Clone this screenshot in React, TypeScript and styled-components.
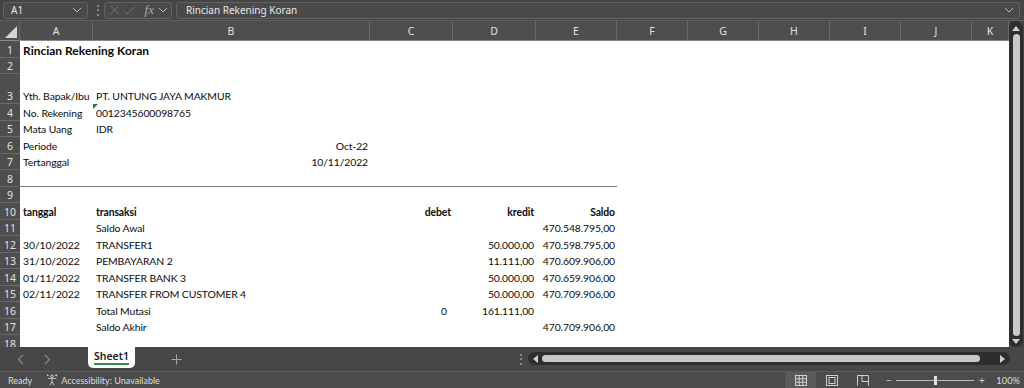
import React from "react";
import styled, { createGlobalStyle } from "styled-components";

const GlobalStyle = createGlobalStyle`
  html, body {
    margin: 0;
    padding: 0;
    background: #444;
  }
  * { box-sizing: border-box; }
`;

// row header + A..J fixed, K takes the rest up to the scrollbar
const COLS = "20px 73px 277px 83px 83px 81px 71px 71px 71px 71px 71px 1fr";
const LETTERS = ["A", "B", "C", "D", "E", "F", "G", "H", "I", "J", "K"];
const UI_FONT = `"Noto Sans", "Open Sans", sans-serif`;
const CELL_FONT = `Lato, "Noto Sans", sans-serif`;

type CellData = { text: string; align?: "left" | "right"; bold?: boolean; pr?: number; flag?: boolean; big?: boolean };
type RowData = { n: number; h: number; cells: (CellData | null)[]; rule?: boolean };

const rows: RowData[] = [
  { n: 1, h: 17, cells: [{ text: "Rincian Rekening Koran", bold: true, big: true }] },
  { n: 2, h: 16, cells: [] },
  { n: 3, h: 30, cells: [{ text: "Yth. Bapak/Ibu" }, { text: "PT. UNTUNG JAYA MAKMUR" }] },
  { n: 4, h: 16.5, cells: [{ text: "No. Rekening" }, { text: "0012345600098765", flag: true }] },
  { n: 5, h: 16.5, cells: [{ text: "Mata Uang" }, { text: "IDR" }] },
  { n: 6, h: 16.5, cells: [{ text: "Periode" }, { text: "Oct-22", align: "right" }] },
  { n: 7, h: 16.5, cells: [{ text: "Tertanggal" }, { text: "10/11/2022", align: "right" }] },
  { n: 8, h: 16.5, cells: [], rule: true },
  { n: 9, h: 16.5, cells: [] },
  {
    n: 10,
    h: 16.5,
    cells: [
      { text: "tanggal", bold: true },
      { text: "transaksi", bold: true },
      { text: "debet", bold: true, align: "right" },
      { text: "kredit", bold: true, align: "right" },
      { text: "Saldo", bold: true, align: "right" },
    ],
  },
  { n: 11, h: 16.5, cells: [null, { text: "Saldo Awal" }, null, null, { text: "470.548.795,00", align: "right" }] },
  {
    n: 12,
    h: 16.5,
    cells: [{ text: "30/10/2022" }, { text: "TRANSFER1" }, null, { text: "50.000,00", align: "right" }, { text: "470.598.795,00", align: "right" }],
  },
  {
    n: 13,
    h: 16.5,
    cells: [{ text: "31/10/2022" }, { text: "PEMBAYARAN 2" }, null, { text: "11.111,00", align: "right" }, { text: "470.609.906,00", align: "right" }],
  },
  {
    n: 14,
    h: 16.5,
    cells: [{ text: "01/11/2022" }, { text: "TRANSFER BANK 3" }, null, { text: "50.000,00", align: "right" }, { text: "470.659.906,00", align: "right" }],
  },
  {
    n: 15,
    h: 16.5,
    cells: [
      { text: "02/11/2022" },
      { text: "TRANSFER FROM CUSTOMER 4" },
      null,
      { text: "50.000,00", align: "right" },
      { text: "470.709.906,00", align: "right" },
    ],
  },
  {
    n: 16,
    h: 16.5,
    cells: [null, { text: "Total Mutasi" }, { text: "0", align: "right", pr: 6 }, { text: "161.111,00", align: "right" }],
  },
  { n: 17, h: 16.5, cells: [null, { text: "Saldo Akhir" }, null, null, { text: "470.709.906,00", align: "right" }] },
  { n: 18, h: 16.5, cells: [] },
];

export default function App() {
  return (
    <>
      <GlobalStyle />
      <Window>
        <FormulaBar>
          <NameBox>
            <span>A1</span>
            <Chevron />
          </NameBox>
          <Dots>⋮</Dots>
          <FxBox>
            <svg width="14" height="14" viewBox="0 0 14 14">
              <path d="M1.5 1.5 L12.5 12.5 M12.5 1.5 L1.5 12.5" stroke="#7e7e7e" strokeWidth="1" fill="none" />
            </svg>
            <svg width="15" height="13" viewBox="0 0 15 13">
              <path d="M1 7 L5 11 L14 1.5" stroke="#7e7e7e" strokeWidth="1" fill="none" />
            </svg>
            <FxLabel>fx</FxLabel>
            <Chevron />
          </FxBox>
          <FormulaInput>
            <span>Rincian Rekening Koran</span>
            <Chevron />
          </FormulaInput>
        </FormulaBar>

        <SheetArea>
          <Grid>
            <HeaderRow>
              <Corner>
                <svg width="12" height="12" viewBox="0 0 12 12">
                  <path d="M12 0 L12 12 L0 12 Z" fill="#d6d6d6" />
                </svg>
              </Corner>
              {LETTERS.map((l) => (
                <ColHead key={l}>{l}</ColHead>
              ))}
            </HeaderRow>
            {rows.map((r) => (
              <Row key={r.n} $h={r.h}>
                <RowHead>{r.n}</RowHead>
                {LETTERS.map((l, i) => {
                  const c = r.cells[i];
                  return (
                    <Cell
                      key={l}
                      $align={c?.align}
                      $bold={c?.bold}
                      $big={c?.big}
                      $pr={c?.pr}
                      $rule={r.rule && i < 5}
                    >
                      {c?.flag && <ErrorFlag />}
                      {c?.text}
                    </Cell>
                  );
                })}
              </Row>
            ))}
          </Grid>
          <VScroll>
            <ArrowUp />
            <VThumb />
            <ArrowDown />
          </VScroll>
        </SheetArea>

        <TabBar>
          <NavArrows>
            <svg width="7" height="11" viewBox="0 0 7 11">
              <path d="M6 1 L1.5 5.5 L6 10" stroke="#8c8c8c" strokeWidth="1.1" fill="none" />
            </svg>
            <svg width="7" height="11" viewBox="0 0 7 11">
              <path d="M1 1 L5.5 5.5 L1 10" stroke="#8c8c8c" strokeWidth="1.1" fill="none" />
            </svg>
          </NavArrows>
          <SheetTab>
            <TabLabel>Sheet1</TabLabel>
          </SheetTab>
          <AddSheet>
            <svg width="11" height="11" viewBox="0 0 11 11">
              <path d="M5.5 0.5 V10.5 M0.5 5.5 H10.5" stroke="#a8a8a8" strokeWidth="1" fill="none" />
            </svg>
          </AddSheet>
          <TabSpacer />
          <Dots>⋮</Dots>
          <HScroll>
            <ArrowLeft />
            <HThumb />
            <ArrowRight />
          </HScroll>
        </TabBar>

        <StatusBar>
          <StatusText>Ready</StatusText>
          <Accessibility>
            <svg width="12" height="12" viewBox="0 0 12 12" fill="none" stroke="#d8d8d8" strokeWidth="0.9">
              <circle cx="6" cy="2.3" r="1.2" />
              <path d="M1.8 4.4 L10.2 4.4 M6 4.4 L6 7.6 M6 7.6 L3.9 11.3 M6 7.6 L8.1 11.3" />
              <path d="M10.2 0.3 L10.2 2.5 M9.1 1.4 L11.3 1.4 M1.7 0.5 L1.7 2.1 M0.9 1.3 L2.5 1.3" />
            </svg>
            <StatusText>Accessibility: Unavailable</StatusText>
          </Accessibility>
          <TabSpacer />
          <ViewButton $active>
            <svg width="12" height="11" viewBox="0 0 12 11" fill="none" stroke="#dcdcdc" strokeWidth="0.9">
              <rect x="0.5" y="0.5" width="11" height="10" />
              <path d="M0.5 3.8 H11.5 M0.5 7.2 H11.5 M4.2 0.5 V10.5 M7.8 0.5 V10.5" />
            </svg>
          </ViewButton>
          <ViewButton>
            <svg width="12" height="11" viewBox="0 0 12 11" fill="none" stroke="#dcdcdc" strokeWidth="0.9">
              <rect x="0.5" y="0.5" width="11" height="10" />
              <rect x="3" y="2.5" width="6" height="6" />
            </svg>
          </ViewButton>
          <ViewButton>
            <svg width="12" height="11" viewBox="0 0 12 11" fill="none" stroke="#dcdcdc" strokeWidth="0.9">
              <path d="M0.5 10.5 V0.5 H11.5 V10.5" />
              <path d="M5 0.5 V6.5 H11.5" />
            </svg>
          </ViewButton>
          <Zoom>
            <ZoomSign>−</ZoomSign>
            <ZoomTrack>
              <ZoomThumb />
            </ZoomTrack>
            <ZoomSign>+</ZoomSign>
            <ZoomPct>100%</ZoomPct>
          </Zoom>
        </StatusBar>
      </Window>
    </>
  );
}

const Chevron: React.FC = () => (
  <svg width="10" height="6" viewBox="0 0 10 6" style={{ flexShrink: 0 }}>
    <path d="M1 1 L5 5 L9 1" stroke="#b8b8b8" strokeWidth="1" fill="none" />
  </svg>
);

const Window = styled.div`
  width: 1024px;
  height: 388px;
  display: flex;
  flex-direction: column;
  background: #444;
  overflow: hidden;
  font-family: ${UI_FONT};
`;

const FormulaBar = styled.div`
  height: 21px;
  display: flex;
  align-items: center;
  gap: 4px;
  padding: 0 4px 0 3px;
  background: #454545;
  border-bottom: 1px solid #5e5e5e;
`;

const Box = styled.div`
  height: 17px;
  display: flex;
  align-items: center;
  border: 1px solid #626262;
  border-radius: 3px;
  background: #4a4a4a;
  color: #e8e8e8;
  font-size: 10px;
`;

const NameBox = styled(Box)`
  width: 85px;
  justify-content: space-between;
  padding: 0 5px 0 7px;
`;

const Dots = styled.span`
  color: #aaa;
  font-size: 12px;
  line-height: 1;
  width: 8px;
  text-align: center;
  align-self: center;
`;

const FxBox = styled(Box)`
  width: 68px;
  gap: 3px;
  padding: 0 3px 0 4px;
`;

const FxLabel = styled.span`
  font-family: "Liberation Serif", serif;
  font-style: italic;
  font-size: 13px;
  color: #a8a8a8;
  margin-left: 6px;
  margin-right: 1px;
`;

const FormulaInput = styled(Box)`
  flex: 1;
  justify-content: space-between;
  padding: 0 5px 0 9px;
`;

const SheetArea = styled.div`
  flex: 1;
  display: flex;
  min-height: 0;
  overflow: hidden;
`;

const Grid = styled.div`
  flex: 1;
  display: flex;
  flex-direction: column;
  overflow: hidden;
`;

const HeaderRow = styled.div`
  height: 20px;
  flex-shrink: 0;
  display: grid;
  grid-template-columns: ${COLS};
  background: #4e4e4e;
  border-bottom: 1px solid #8a8a8a;
`;

const Corner = styled.div`
  display: flex;
  align-items: flex-end;
  justify-content: flex-end;
  padding: 0 2px 2px 0;
  border-right: 1px solid #6a6a6a;
`;

const ColHead = styled.div`
  display: flex;
  align-items: center;
  justify-content: center;
  padding-top: 1px;
  color: #e2e2e2;
  font-size: 10.5px;
  border-right: 1px solid #6a6a6a;
`;

const Row = styled.div<{ $h: number }>`
  height: ${(p) => p.$h}px;
  flex-shrink: 0;
  display: grid;
  grid-template-columns: ${COLS};
  background: #fff;
`;

const RowHead = styled.div`
  background: #4e4e4e;
  color: #e2e2e2;
  font-size: 10.5px;
  display: flex;
  align-items: flex-end;
  justify-content: center;
  border-bottom: 1px solid #6a6a6a;
`;

const Cell = styled.div<{
  $align?: "left" | "right";
  $bold?: boolean;
  $big?: boolean;
  $pr?: number;
  $rule?: boolean;
}>`
  position: relative;
  display: flex;
  align-items: flex-end;
  justify-content: ${(p) => (p.$align === "right" ? "flex-end" : "flex-start")};
  padding: 0 ${(p) => p.$pr ?? 2}px 1px 3px;
  white-space: nowrap;
  overflow: visible;
  font-family: ${CELL_FONT};
  font-size: ${(p) => (p.$big ? 12 : 10.4)}px;
  letter-spacing: ${(p) => (p.$big ? 0 : -0.1)}px;
  line-height: 13px;
  font-weight: ${(p) => (p.$bold ? 700 : 400)};
  color: #0a0a0a;
  border-bottom: ${(p) => (p.$rule ? "1px solid #7a7a7a" : "none")};
`;

const ErrorFlag = styled.span`
  position: absolute;
  top: 0;
  left: 0;
  width: 0;
  height: 0;
  border-top: 5px solid #1e7b3c;
  border-right: 5px solid transparent;
`;

const VScroll = styled.div`
  width: 14px;
  display: flex;
  flex-direction: column;
  align-items: center;
  gap: 3px;
  padding: 5px 0 3px;
  background: #2e2e2e;
  border-radius: 7px;
  margin: 0 1px 0 0;
`;

const ArrowUp = styled.span`
  width: 0;
  height: 0;
  border-left: 4px solid transparent;
  border-right: 4px solid transparent;
  border-bottom: 5px solid #d0d0d0;
`;

const ArrowDown = styled.span`
  width: 0;
  height: 0;
  border-left: 4px solid transparent;
  border-right: 4px solid transparent;
  border-top: 5px solid #d0d0d0;
`;

const VThumb = styled.div`
  flex: 1;
  width: 7px;
  border-radius: 4px;
  background: #c9c9c9;
`;

const TabBar = styled.div`
  height: 25px;
  display: flex;
  align-items: stretch;
  background: #474747;
  border-bottom: 1px solid #5a5a5a;
  padding-right: 14px;
`;

const NavArrows = styled.div`
  width: 88px;
  display: flex;
  align-items: center;
  gap: 20px;
  padding-left: 17px;
`;

const SheetTab = styled.div`
  width: 47px;
  margin-bottom: 3px;
  background: #fdfdfd;
  border-radius: 0 0 5px 5px;
  display: flex;
  align-items: center;
  justify-content: center;
`;

const TabLabel = styled.span`
  font-size: 10.5px;
  font-weight: 600;
  color: #1a1a1a;
  border-bottom: 2px solid #2f8f4f;
  line-height: 13px;
`;

const AddSheet = styled.span`
  width: 82px;
  display: flex;
  align-items: center;
  justify-content: center;
`;

const TabSpacer = styled.div`
  flex: 1;
`;

const HScroll = styled.div`
  width: 482px;
  margin: 5px 0 6px 5px;
  display: flex;
  align-items: center;
  gap: 4px;
  padding: 0 5px;
  background: #2e2e2e;
  border-radius: 7px;
`;

const ArrowLeft = styled.span`
  width: 0;
  height: 0;
  border-top: 4px solid transparent;
  border-bottom: 4px solid transparent;
  border-right: 5px solid #d0d0d0;
`;

const ArrowRight = styled.span`
  width: 0;
  height: 0;
  border-top: 4px solid transparent;
  border-bottom: 4px solid transparent;
  border-left: 5px solid #d0d0d0;
  margin-left: 16px;
`;

const HThumb = styled.div`
  flex: 1;
  height: 7px;
  border-radius: 4px;
  background: #c9c9c9;
`;

const StatusBar = styled.div`
  height: 16px;
  display: flex;
  align-items: center;
  padding: 0 4px 0 8px;
  background: #4b4b4b;
`;

const StatusText = styled.span`
  color: #dedede;
  font-family: Lato, "Noto Sans", sans-serif;
  font-size: 9px;
`;

const Accessibility = styled.div`
  display: flex;
  align-items: center;
  gap: 3px;
  margin-left: 14px;
`;

const ViewButton = styled.div<{ $active?: boolean }>`
  width: 31px;
  height: 16px;
  display: flex;
  align-items: center;
  justify-content: center;
  background: ${(p) => (p.$active ? "#5a5a5a" : "transparent")};
`;

const Zoom = styled.div`
  display: flex;
  align-items: center;
  gap: 4px;
  margin-left: 7px;
  color: #cfcfcf;
`;

const ZoomSign = styled.span`
  font-size: 10px;
  width: 7px;
  text-align: center;
`;

const ZoomTrack = styled.div`
  position: relative;
  width: 78px;
  height: 1px;
  background: #bdbdbd;
`;

const ZoomThumb = styled.span`
  position: absolute;
  left: 38px;
  top: -4px;
  width: 3px;
  height: 9px;
  background: #e0e0e0;
`;

const ZoomPct = styled.span`
  margin-left: 7px;
  font-family: Lato, "Noto Sans", sans-serif;
  font-size: 9.3px;
  color: #dedede;
`;
